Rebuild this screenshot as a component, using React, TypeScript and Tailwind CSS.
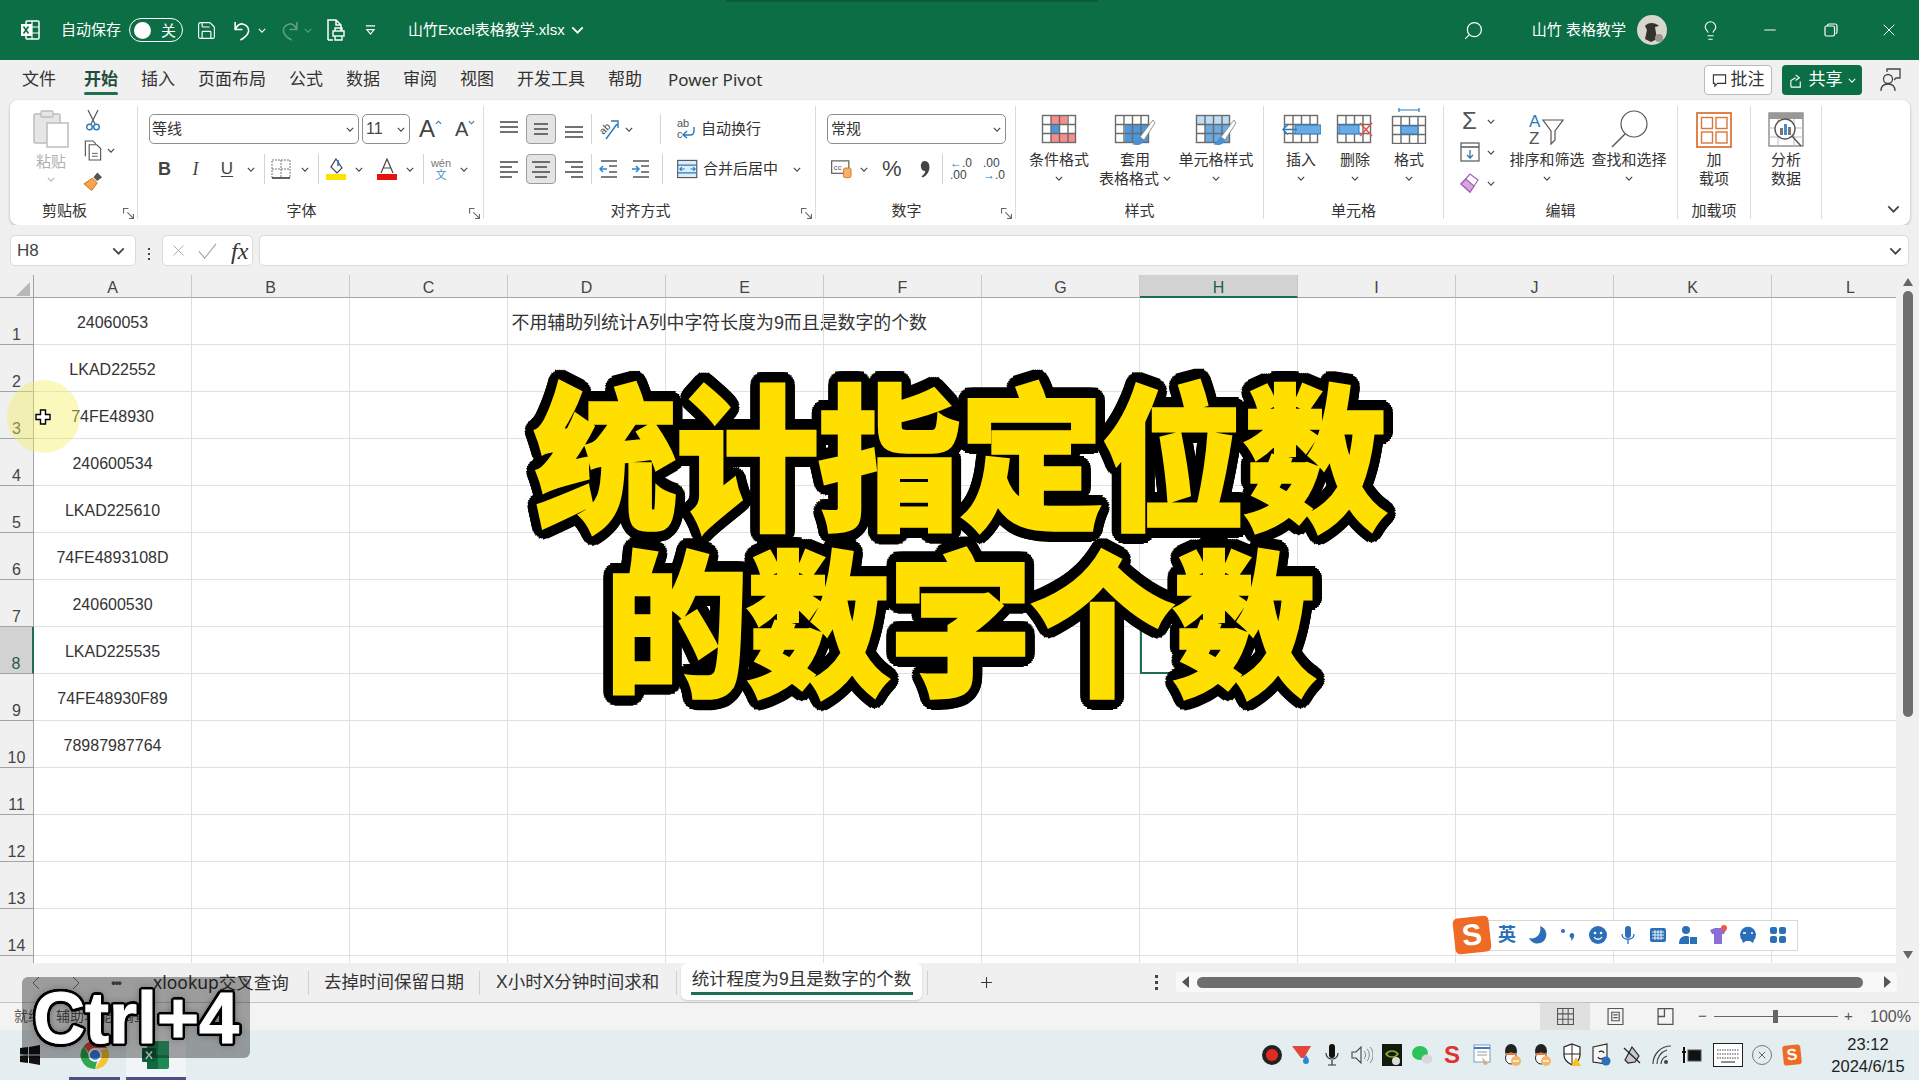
import type { ReactNode } from 'react'
import { Save, Search, Lightbulb, Minus, X, Plus } from 'lucide-react'

const CJK = "font-['Liberation_Sans','Noto_Sans_CJK_SC',sans-serif]"

// round outline for the big title and the key overlay
function outline(radius: number, color: string) {
  const rings = [radius, radius * 0.5]
  const parts: string[] = []
  for (const r of rings) {
    for (let i = 0; i < 32; i++) {
      const a = (i / 32) * Math.PI * 2
      parts.push(`${(Math.cos(a) * r).toFixed(1)}px ${(Math.sin(a) * r).toFixed(1)}px 0 ${color}`)
    }
  }
  return parts.join(',')
}

function Ch({ color = '#444', big = false }: { color?: string; big?: boolean }) {
  return (
    <svg viewBox="0 0 10 6" className={big ? 'h-[8px] w-[13px]' : 'h-[5px] w-[8px]'} aria-hidden="true">
      <path d="M1 1l4 4 4-4" fill="none" stroke={color} strokeWidth="1.4" />
    </svg>
  )
}

function Launcher() {
  return (
    <svg viewBox="0 0 10 10" className="absolute bottom-[0px] right-[3px] h-[11px] w-[11px]" aria-hidden="true">
      <path d="M.5 5V.5H5M4 4l5 5M9.5 5.5v4H5.5" fill="none" stroke="#666" strokeWidth="1" />
    </svg>
  )
}

function Sep() {
  return <div className="h-[30px] w-px shrink-0 bg-[#d4d4d4]" />
}

function Group({ label, className, launcher, children }: { label: string; className: string; launcher?: boolean; children: ReactNode }) {
  return (
    <div className={`relative flex h-[113px] shrink-0 flex-col border-r border-[#dcdcdc] ${className}`}>
      <div className="h-[96px]">{children}</div>
      <div className={`text-center text-[15px] leading-[17px] text-[#333] ${launcher ? 'pr-[18px]' : ''}`}>{label}</div>
      {launcher && <Launcher />}
    </div>
  )
}

function TableGrid() {
  return (
    <g fill="none" stroke="#6b6b6b" strokeWidth="1.4">
      <rect x="1.5" y="1.5" width="33" height="27" />
      <path d="M10 1.5v27M18.5 1.5v27M27 1.5v27M1.5 10.5h33M1.5 19.5h33" />
    </g>
  )
}

function Brush() {
  return (
    <g>
      <path d="M39 6L26 23l4 3L41 9z" fill="#fff" stroke="#8a8a8a" strokeWidth=".9" />
      <path d="M26 23c-3 1-3 5-8 7 5 2 11 1 12-4z" fill="#4a90d0" />
    </g>
  )
}

function BigButton({ icon, lines, chevronInline, className }: { icon: ReactNode; lines: string[]; chevronInline?: boolean; className: string }) {
  return (
    <div className={`flex shrink-0 flex-col items-center pt-[8px] text-[15px] leading-[19px] text-[#333] ${className}`}>
      <div className="flex h-[36px] items-start justify-center">{icon}</div>
      <div className="whitespace-nowrap">{lines[0]}</div>
      {lines[1] ? (
        <div className="flex items-center gap-[4px] whitespace-nowrap">
          {lines[1]}
          {chevronInline && <Ch />}
        </div>
      ) : (
        <div className="flex h-[19px] items-center"><Ch /></div>
      )}
    </div>
  )
}

function AlignLines({ d, box }: { d: string; box?: boolean }) {
  return (
    <div className={`flex h-[30px] w-[30px] items-center justify-center rounded-[4px] ${box ? 'border border-[#9c9c9c] bg-[#e4e4e4]' : ''}`}>
      <svg viewBox="0 0 20 20" className="h-[20px] w-[20px]" aria-hidden="true">
        <path d={d} fill="none" stroke="#444" strokeWidth="1.4" />
      </svg>
    </div>
  )
}

function IndentIcon({ flip }: { flip?: boolean }) {
  return (
    <svg viewBox="0 0 20 20" className="h-[20px] w-[20px]" aria-hidden="true">
      <path d="M2 2h16M10 7h8M10 13h8M2 18h16" fill="none" stroke="#555" strokeWidth="1.3" />
      <path d={flip ? 'M1 10h7M5 7l3 3-3 3' : 'M8 10H1M4 7l-3 3 3 3'} fill="none" stroke="#2a87d8" strokeWidth="1.5" />
    </svg>
  )
}

function TitleBar() {
  return (
    <header className="relative flex h-[60px] shrink-0 items-center bg-[#0b6e45] text-[15px] text-white">
      <div className="absolute left-[726px] top-0 h-[2px] w-[372px] bg-[#0a5a39]" />
      <svg viewBox="0 0 20 20" className="ml-[20px] h-[20px] w-[20px]" aria-hidden="true">
        <rect x="6" y="1" width="13" height="18" rx="1" fill="none" stroke="#fff" strokeWidth="1.5" />
        <path d="M12 1v18M6 7h13M6 13h13" stroke="#fff" strokeWidth="1.2" />
        <rect x="1" y="4" width="11" height="12" fill="#fff" />
        <path d="M3.5 6.5l5 7M8.5 6.5l-5 7" stroke="#0b6e45" strokeWidth="1.6" />
      </svg>
      <span className="ml-[21px] w-[60px] whitespace-nowrap">自动保存</span>
      <div className="ml-[8px] flex h-[24px] w-[54px] items-center rounded-full border border-white pl-[4px]">
        <div className="h-[17px] w-[17px] rounded-full bg-white" />
        <span className="ml-[10px] text-[15px] leading-none">关</span>
      </div>
      <Save className="ml-[13px] h-[21px] w-[21px]" strokeWidth={1.3} aria-hidden="true" />
      <svg viewBox="0 0 20 20" className="ml-[15px] h-[21px] w-[21px]" aria-hidden="true">
        <path d="M3 2v7h7M3 9c2-4 5-6 8-5 4 1 6 5 4 9-1 2-3 4-7 6" fill="none" stroke="#fff" strokeWidth="1.5" />
      </svg>
      <span className="ml-[5px]"><Ch color="#fff" /></span>
      <svg viewBox="0 0 20 20" className="ml-[13px] h-[21px] w-[21px]" aria-hidden="true">
        <path d="M17 2v7h-7M17 9c-2-4-5-6-8-5-4 1-6 5-4 9 1 2 3 4 7 6" fill="none" stroke="#5f9f84" strokeWidth="1.5" />
      </svg>
      <span className="ml-[4px]"><Ch color="#5f9f84" /></span>
      <svg viewBox="0 0 20 22" className="ml-[14px] h-[22px] w-[20px]" aria-hidden="true">
        <path d="M2 21V1h8l5 5v6M10 1v5h5" fill="none" stroke="#fff" strokeWidth="1.5" />
        <rect x="7" y="12" width="11" height="5" fill="none" stroke="#fff" strokeWidth="1.4" />
        <path d="M9 12V9h7v3M9 17v4h7v-4M2 21h5" fill="none" stroke="#fff" strokeWidth="1.4" />
      </svg>
      <svg viewBox="0 0 12 12" className="ml-[19px] h-[13px] w-[11px]" aria-hidden="true">
        <path d="M1 1h10M2 5l4 5 4-5z" fill="none" stroke="#fff" strokeWidth="1.2" />
      </svg>
      <span className="ml-[32px] whitespace-nowrap">山竹Excel表格教学.xlsx</span>
      <span className="ml-[6px]"><Ch color="#fff" big /></span>

      <div className="ml-auto flex items-center">
        <Search className="h-[21px] w-[21px] -scale-x-100" strokeWidth={1.4} aria-hidden="true" />
        <span className="ml-[48px] whitespace-nowrap">山竹 表格教学</span>
        <svg viewBox="0 0 30 30" className="ml-[11px] h-[30px] w-[30px]" aria-hidden="true">
          <circle cx="15" cy="15" r="15" fill="#d9d6cc" />
          <path d="M8 11c3-4 10-4 14 0l-4 1 2 12-6 3-6-3 2-9z" fill="#33322f" />
          <circle cx="22" cy="23" r="4" fill="#99968d" />
        </svg>
        <Lightbulb className="ml-[33px] h-[21px] w-[21px]" strokeWidth={1.3} aria-hidden="true" />
        <Minus className="ml-[40px] h-[18px] w-[18px]" strokeWidth={1.3} aria-hidden="true" />
        <svg viewBox="0 0 14 14" className="ml-[45px] h-[14px] w-[14px]" aria-hidden="true">
          <rect x="1" y="3" width="9.5" height="10" rx="1.5" fill="none" stroke="#fff" strokeWidth="1.2" />
          <path d="M3.5 3V2.5C3.5 1.5 4 1 5 1h6c1.2 0 2 .8 2 2v6c0 1-.5 1.5-1.5 1.5" fill="none" stroke="#fff" strokeWidth="1.2" />
        </svg>
        <X className="ml-[41px] mr-[20px] h-[20px] w-[20px]" strokeWidth={1.2} aria-hidden="true" />
      </div>
    </header>
  )
}

const tabs = ['文件', '开始', '插入', '页面布局', '公式', '数据', '审阅', '视图', '开发工具', '帮助', 'Power Pivot']

function TabRow() {
  return (
    <nav className="flex h-[40px] shrink-0 items-center bg-[#f0f0f0] pl-[22px] text-[17px] text-[#333]">
      <div className="flex gap-[23px] pt-[2px]">
        {tabs.map(t => (
          <div key={t} className={`relative h-[32px] whitespace-nowrap leading-[30px] ${t === '开始' ? 'ml-[5px] font-bold text-[#1f4f3a]' : ''} ${t === 'Power Pivot' ? "ml-[3px] font-['Noto_Sans',sans-serif]" : ''}`}>
            {t}
            {t === '开始' && <div className="absolute bottom-[2px] left-0 h-[3px] w-full rounded-full bg-[#1f6e4d]" />}
          </div>
        ))}
      </div>
      <div className="ml-auto flex items-center">
        <div className="flex h-[30px] w-[68px] items-center justify-center gap-[4px] rounded-[4px] border border-[#b9b9b9] bg-white text-[17px]">
          <svg viewBox="0 0 16 16" className="h-[15px] w-[15px]" aria-hidden="true">
            <path d="M1.5 2h13v9H6l-3 3v-3H1.5z" fill="none" stroke="#333" strokeWidth="1.2" />
          </svg>
          批注
        </div>
        <div className="ml-[10px] flex h-[30px] w-[80px] items-center justify-center gap-[5px] rounded-[4px] bg-[#0b6e45] text-[17px] text-white">
          <svg viewBox="0 0 16 16" className="h-[15px] w-[15px]" aria-hidden="true">
            <path d="M2 15V8l5-3M7 2l4 3-4 3M2 15h10V9" fill="none" stroke="#fff" strokeWidth="1.2" />
          </svg>
          共享
          <Ch color="#fff" />
        </div>
        <svg viewBox="0 0 22 24" className="ml-[17px] mr-[18px] h-[24px] w-[22px]" aria-hidden="true">
          <circle cx="9" cy="11" r="4.5" fill="none" stroke="#444" strokeWidth="1.3" />
          <path d="M2 23c0-5 3-7 7-7s7 2 7 7M8 4V1h13v9h-4l-2 2" fill="none" stroke="#444" strokeWidth="1.3" />
        </svg>
      </div>
    </nav>
  )
}

function Ribbon() {
  return (
    <div className="h-[125px] shrink-0 bg-[#f0f0f0] px-[10px]">
      <div className="flex h-[125px] w-[1900px] rounded-[8px] bg-white py-[6px] shadow-[0_1px_3px_rgba(0,0,0,0.28)]">
        <Group label="剪贴板" launcher className="w-[128px]">
          <div className="flex h-full">
            <div className="ml-[23px] flex w-[36px] flex-col items-center pt-[4px]">
              <svg viewBox="0 0 36 38" className="h-[38px] w-[36px]" aria-hidden="true">
                <rect x="1" y="4" width="26" height="29" rx="1" fill="#e6e6e6" stroke="#bdbdbd" strokeWidth="1.5" />
                <rect x="8" y="1" width="12" height="6" rx="1" fill="#e6e6e6" stroke="#bdbdbd" strokeWidth="1.3" />
                <rect x="14" y="13" width="21" height="24" fill="#fff" stroke="#bdbdbd" strokeWidth="1.5" />
              </svg>
              <span className="mt-[5px] whitespace-nowrap text-[15px] leading-[18px] text-[#b0b0b0]">粘贴</span>
              <span className="mt-[6px]"><Ch color="#b5b5b5" /></span>
            </div>
            <div className="ml-[14px] flex flex-col items-start">
              <svg viewBox="0 0 16 22" className="mt-[3px] ml-[2px] h-[22px] w-[16px]" aria-hidden="true">
                <path d="M3 1l7 14M13 1L6 15" fill="none" stroke="#555" strokeWidth="1.2" />
                <circle cx="4.5" cy="18" r="2.8" fill="none" stroke="#2a7ab8" strokeWidth="1.4" />
                <circle cx="11.5" cy="18" r="2.8" fill="none" stroke="#2a7ab8" strokeWidth="1.4" />
              </svg>
              <div className="mt-[9px] flex items-center">
                <svg viewBox="0 0 20 22" className="h-[21px] w-[20px]" aria-hidden="true">
                  <path d="M2 17V1h8l3 3M6 21V5h8l4 4v12z" fill="#fff" stroke="#555" strokeWidth="1.2" />
                  <path d="M9 14h6M9 17h6" stroke="#555" strokeWidth="1" />
                </svg>
                <span className="ml-[4px]"><Ch /></span>
              </div>
              <svg viewBox="0 0 22 22" className="mt-[9px] h-[22px] w-[21px]" aria-hidden="true">
                <path d="M15 2l5 5-5 4-4-4z" fill="#555" />
                <path d="M10 8l5 5-6 8-8-7z" fill="#f5a54a" stroke="#c9701c" strokeWidth="1" />
              </svg>
            </div>
          </div>
        </Group>

        <Group label="字体" launcher className="w-[346px]">
          <div className="pl-[11px] pt-[8px]">
            <div className="flex h-[30px] items-center">
              <div className="flex h-[30px] w-[210px] items-center justify-between rounded-[5px] border border-[#8f8f8f] pl-[2px] pr-[4px] text-[15px] text-[#333]">
                等线<Ch />
              </div>
              <div className="ml-[3px] flex h-[30px] w-[48px] items-center justify-between rounded-[5px] border border-[#8f8f8f] pl-[3px] pr-[4px] text-[16px] text-[#444]">
                11<Ch />
              </div>
              <div className="ml-[9px] flex items-start text-[24px] leading-[24px] text-[#444]">
                A<svg viewBox="0 0 8 5" className="mt-[3px] h-[5px] w-[7px]" aria-hidden="true"><path d="M1 4l3-3 3 3" fill="none" stroke="#2a7ab8" strokeWidth="1.3" /></svg>
              </div>
              <div className="ml-[13px] flex items-start text-[20px] leading-[24px] text-[#444]">
                A<svg viewBox="0 0 8 5" className="mt-[3px] h-[5px] w-[7px]" aria-hidden="true"><path d="M1 1l3 3 3-3" fill="none" stroke="#2a7ab8" strokeWidth="1.3" /></svg>
              </div>
            </div>
            <div className="mt-[10px] flex h-[30px] items-center text-[#444]">
              <div className="flex w-[31px] justify-center font-['Liberation_Sans'] text-[18px] font-bold">B</div>
              <div className="flex w-[31px] justify-center font-['Liberation_Serif'] text-[18px] italic">I</div>
              <div className="flex w-[32px] justify-center font-['Liberation_Sans'] text-[17px] underline underline-offset-2">U</div>
              <div className="flex w-[16px] justify-center"><Ch /></div>
              <div className="ml-[5px]"><Sep /></div>
              <div className="flex w-[32px] justify-center">
                <svg viewBox="0 0 20 20" className="h-[20px] w-[20px]" aria-hidden="true">
                  <path d="M1 1h18v18H1zM10 1v18M1 10h18" fill="none" stroke="#777" strokeWidth="1" strokeDasharray="2 1" />
                  <path d="M1 19h18" stroke="#444" strokeWidth="1.6" />
                </svg>
              </div>
              <div className="flex w-[16px] justify-center"><Ch /></div>
              <div className="ml-[5px]"><Sep /></div>
              <div className="flex w-[34px] justify-center">
                <svg viewBox="0 0 22 22" className="h-[22px] w-[22px]" aria-hidden="true">
                  <path d="M11 1l6 9-5 5-6-6z" fill="#fff" stroke="#444" strokeWidth="1.2" />
                  <path d="M13 2v6" stroke="#2a7ab8" strokeWidth="1.6" />
                  <rect x="1" y="16" width="20" height="6" fill="#fde400" />
                </svg>
              </div>
              <div className="flex w-[12px] justify-center"><Ch /></div>
              <div className="ml-[6px] flex w-[32px] justify-center">
                <svg viewBox="0 0 22 22" className="h-[22px] w-[22px]" aria-hidden="true">
                  <path d="M5 15l6-14 6 14M7.5 10h7" fill="none" stroke="#444" strokeWidth="1.2" />
                  <rect x="1" y="16" width="20" height="6" fill="#e8120c" />
                </svg>
              </div>
              <div className="flex w-[14px] justify-center"><Ch /></div>
              <div className="ml-[6px]"><Sep /></div>
              <div className="flex w-[34px] flex-col items-center text-[11px] leading-[12px]">
                <span className="text-[#777]">wén</span>
                <span className="text-[#3d8fc4]">文</span>
              </div>
              <div className="flex w-[12px] justify-center"><Ch /></div>
            </div>
          </div>
        </Group>

        <Group label="对齐方式" launcher className="w-[332px]">
          <div className="flex pl-[10px] pt-[8px]">
            <div className="flex w-[97px] flex-col gap-[10px]">
              <div className="flex items-center">
                <AlignLines d="M1 3h18M1 8h18M1 13h18" />
                <span className="ml-[2px]"><AlignLines box d="M3 5h14M3 10h14M3 15h14" /></span>
                <span className="ml-[3px]"><AlignLines d="M1 8h18M1 13h18M1 18h18" /></span>
              </div>
              <div className="flex items-center">
                <AlignLines d="M1 3h18M1 8h12M1 13h18M1 18h12" />
                <span className="ml-[2px]"><AlignLines box d="M1 3h18M4 8h12M1 13h18M4 18h12" /></span>
                <span className="ml-[3px]"><AlignLines d="M1 3h18M7 8h12M1 13h18M7 18h12" /></span>
              </div>
            </div>
            <div className="flex flex-col gap-[10px]">
              <div className="flex h-[30px] items-center">
                <Sep />
                <svg viewBox="0 0 22 22" className="ml-[6px] h-[22px] w-[22px] overflow-visible" aria-hidden="true">
                  <path d="M8 21L19 6M13 3h7v7" fill="none" stroke="#2a7ab8" strokeWidth="1.4" />
                  <text x="2" y="15" fontSize="10" fill="#444" transform="rotate(-45 6 12)">ab</text>
                </svg>
                <span className="ml-[5px]"><Ch /></span>
                <div className="ml-[27px]"><Sep /></div>
                <svg viewBox="0 0 20 24" className="ml-[15px] h-[24px] w-[20px]" aria-hidden="true">
                  <text x="1" y="10" fontSize="11" fill="#555">ab</text>
                  <text x="1" y="21" fontSize="11" fill="#555">c</text>
                  <path d="M18 10v4c0 3-2 4-4 4H8M11 14l-4 4 4 3" fill="none" stroke="#2a7ab8" strokeWidth="1.4" />
                </svg>
                <span className="ml-[5px] whitespace-nowrap text-[15px] text-[#333]">自动换行</span>
              </div>
              <div className="flex h-[30px] items-center">
                <Sep />
                <span className="ml-[7px]"><IndentIcon /></span>
                <span className="ml-[12px]"><IndentIcon flip /></span>
                <div className="ml-[11px]"><Sep /></div>
                <svg viewBox="0 0 22 20" className="ml-[14px] h-[20px] w-[21px]" aria-hidden="true">
                  <rect x=".7" y="1" width="20" height="18" fill="#dceefa" stroke="#555" strokeWidth="1.2" />
                  <path d="M1 6h20M1 14h20M8 10H3m2-2l-2 2 2 2M14 10h5m-2-2l2 2-2 2" fill="none" stroke="#2a7ab8" strokeWidth="1.2" />
                </svg>
                <span className="ml-[5px] whitespace-nowrap text-[15px] text-[#333]">合并后居中</span>
                <span className="ml-[15px]"><Ch /></span>
              </div>
            </div>
          </div>
        </Group>

        <Group label="数字" launcher className="w-[200px]">
          <div className="pl-[11px] pt-[8px]">
            <div className="flex h-[30px] w-[179px] items-center justify-between rounded-[5px] border border-[#8f8f8f] pl-[3px] pr-[4px] text-[15px] text-[#333]">
              常规<Ch />
            </div>
            <div className="mt-[10px] flex h-[30px] items-center">
              <svg viewBox="0 0 22 20" className="ml-[4px] h-[20px] w-[21px]" aria-hidden="true">
                <rect x=".7" y="1.5" width="18" height="13" fill="none" stroke="#555" strokeWidth="1.2" />
                <text x="3" y="11" fontSize="8" fill="#555">cc</text>
                <rect x="13" y="9" width="8" height="10" rx="2" fill="#f6b26b" stroke="#d9761c" strokeWidth="1" />
              </svg>
              <span className="ml-[8px]"><Ch /></span>
              <span className="ml-[14px] w-[20px] text-[22px] leading-none text-[#444]">%</span>
              <svg viewBox="0 0 10 18" className="ml-[18px] h-[18px] w-[10px]" aria-hidden="true">
                <path d="M4.5 1C8 1 9.5 4 9.5 7c0 5-3 9-7 10.500l-1-1C4 14.5 5 13 5.200 11 2.500 11 .8 9 .8 6 .8 3 2.500 1 4.500 1z" fill="#444" />
              </svg>
              <div className="ml-[12px]"><Sep /></div>
              <div className="ml-[7px] flex w-[20px] flex-col whitespace-nowrap text-[12px] leading-[12px] text-[#444]">
                <span className="text-[#2a7ab8]">←<span className="text-[#444]">.0</span></span>
                <span>.00</span>
              </div>
              <div className="ml-[13px] flex w-[20px] flex-col whitespace-nowrap text-[12px] leading-[12px] text-[#444]">
                <span>.00</span>
                <span className="text-[#2a7ab8]">→<span className="text-[#444]">.0</span></span>
              </div>
            </div>
          </div>
        </Group>

        <Group label="样式" className="w-[248px]">
          <div className="flex">
            <BigButton
              className="ml-[12px] w-[62px]"
              lines={['条件格式']}
              icon={
                <svg viewBox="0 0 36 30" className="h-[30px] w-[36px]" aria-hidden="true">
                  <rect x="10" y="2" width="16" height="9" fill="#f98c8c" />
                  <rect x="10" y="20" width="25" height="9" fill="#f98c8c" />
                  <rect x="10" y="11" width="9" height="9" fill="#4a98dd" />
                  <TableGrid />
                </svg>
              }
            />
            <BigButton
              className="ml-[9px] w-[72px]"
              lines={['套用', '表格格式']}
              chevronInline
              icon={
                <svg viewBox="0 0 42 32" className="h-[32px] w-[42px]" aria-hidden="true">
                  <rect x="11" y="11" width="24" height="18" fill="#4a98dd" />
                  <TableGrid />
                  <Brush />
                </svg>
              }
            />
            <BigButton
              className="ml-[7px] w-[76px]"
              lines={['单元格样式']}
              icon={
                <svg viewBox="0 0 42 32" className="h-[32px] w-[42px]" aria-hidden="true">
                  <rect x="2" y="2" width="32" height="8" fill="#bfddf5" />
                  <rect x="10" y="10" width="24" height="18" fill="#6aaae6" />
                  <TableGrid />
                  <Brush />
                </svg>
              }
            />
          </div>
        </Group>

        <Group label="单元格" className="w-[180px]">
          <div className="flex">
            <BigButton
              className="ml-[19px] w-[36px]"
              lines={['插入']}
              icon={
                <svg viewBox="0 0 40 30" className="h-[30px] w-[40px]" aria-hidden="true">
                  <g transform="translate(2 0)"><TableGrid /></g>
                  <rect x="14" y="11" width="26" height="9" fill="#6aaae6" stroke="#2a7ab8" />
                  <path d="M16 15.5H2m5-5l-5 5 5 5" fill="#fff" stroke="#2a7ab8" strokeWidth="1.4" />
                </svg>
              }
            />
            <BigButton
              className="ml-[18px] w-[36px]"
              lines={['删除']}
              icon={
                <svg viewBox="0 0 38 30" className="h-[30px] w-[38px]" aria-hidden="true">
                  <TableGrid />
                  <rect x="3" y="11" width="20" height="9" fill="#6aaae6" stroke="#2a7ab8" />
                  <path d="M24 9l12 13M36 9L24 22" stroke="#e2574c" strokeWidth="1.6" />
                </svg>
              }
            />
            <BigButton
              className="ml-[18px] w-[36px]"
              lines={['格式']}
              icon={
                <svg viewBox="0 0 36 36" className="-mt-[6px] h-[36px] w-[36px]" aria-hidden="true">
                  <path d="M8 2h20M8 0v4M28 0v4" stroke="#2a7ab8" strokeWidth="1.2" />
                  <g transform="translate(0 7)">
                    <TableGrid />
                    <rect x="10" y="11" width="17" height="8" fill="#6aaae6" stroke="#2a7ab8" />
                  </g>
                </svg>
              }
            />
          </div>
        </Group>

        <Group label="编辑" className="w-[234px]">
          <div className="flex">
            <div className="ml-[16px] flex w-[40px] flex-col">
              <div className="flex h-[30px] items-center">
                <span className="ml-[2px] w-[18px] text-[24px] leading-none text-[#555]">Σ</span>
                <span className="ml-[7px]"><Ch /></span>
              </div>
              <div className="mt-[1px] flex h-[30px] items-center">
                <svg viewBox="0 0 20 20" className="h-[20px] w-[20px]" aria-hidden="true">
                  <rect x="1" y="1" width="18" height="18" fill="#fff" stroke="#555" strokeWidth="1.2" />
                  <path d="M1 5h18" stroke="#555" strokeWidth="1.5" />
                  <path d="M10 8v8m-3-3l3 3 3-3" fill="none" stroke="#2a7ab8" strokeWidth="1.3" />
                </svg>
                <span className="ml-[7px]"><Ch /></span>
              </div>
              <div className="mt-[1px] flex h-[30px] items-center">
                <svg viewBox="0 0 20 20" className="h-[20px] w-[20px]" aria-hidden="true">
                  <path d="M1 11l9-10 8 6-8 12z" fill="#fff" stroke="#a45fb8" strokeWidth="1.2" />
                  <path d="M1 11l5-5 8 7-4 6z" fill="#d6a6e2" stroke="#a45fb8" strokeWidth="1.2" />
                </svg>
                <span className="ml-[7px]"><Ch /></span>
              </div>
            </div>
            <BigButton
              className="ml-[9px] w-[76px]"
              lines={['排序和筛选']}
              icon={
                <svg viewBox="0 0 36 36" className="-mt-[4px] h-[36px] w-[36px] overflow-visible" aria-hidden="true">
                  <text x="0" y="17" fontSize="17" fill="#2a7ab8">A</text>
                  <text x="0" y="34" fontSize="17" fill="#555">Z</text>
                  <path d="M14 10h20l-8 11v9l-4 4V21z" fill="#fff" stroke="#555" strokeWidth="1.2" />
                </svg>
              }
            />
            <BigButton
              className="ml-[6px] w-[76px]"
              lines={['查找和选择']}
              icon={
                <svg viewBox="0 0 38 38" className="-mt-[4px] h-[38px] w-[38px]" aria-hidden="true">
                  <circle cx="24" cy="14" r="13" fill="#fff" stroke="#555" strokeWidth="1.2" />
                  <path d="M15 24L2 37" stroke="#555" strokeWidth="1.4" />
                </svg>
              }
            />
          </div>
        </Group>

        <Group label="加载项" className="w-[73px]">
          <BigButton
            className="w-full"
            lines={['加', '载项']}
            icon={
              <svg viewBox="0 0 36 36" className="-mt-[2px] h-[36px] w-[36px]" aria-hidden="true">
                <rect x="1" y="1" width="34" height="34" fill="#fff" stroke="#d9773c" strokeWidth="1.8" />
                <rect x="5.5" y="5.5" width="11" height="11" fill="none" stroke="#d9773c" strokeWidth="1.4" />
                <rect x="20" y="5.5" width="11" height="11" fill="none" stroke="#d9773c" strokeWidth="1.4" />
                <rect x="5.5" y="20" width="11" height="11" fill="none" stroke="#d9773c" strokeWidth="1.4" />
                <rect x="20" y="20" width="11" height="11" fill="none" stroke="#d9773c" strokeWidth="1.4" />
              </svg>
            }
          />
        </Group>

        <Group label="" className="w-[71px]">
          <BigButton
            className="w-full"
            lines={['分析', '数据']}
            icon={
              <svg viewBox="0 0 36 36" className="-mt-[2px] h-[36px] w-[36px]" aria-hidden="true">
                <rect x="1" y="1" width="34" height="33" fill="#fff" stroke="#777" strokeWidth="1.2" />
                <rect x="1" y="1" width="34" height="6" fill="#999" />
                <path d="M1 16h34M1 25h34M10 7v27M26 7v27" stroke="#bbb" strokeWidth="1" />
                <circle cx="17" cy="17" r="10" fill="#fff" stroke="#555" strokeWidth="1.4" />
                <path d="M24 24l9 10" stroke="#555" strokeWidth="1.4" />
                <rect x="12" y="16" width="3" height="7" fill="#777" />
                <rect x="16" y="12" width="3" height="11" fill="#3f8ccf" />
                <rect x="20" y="15" width="3" height="8" fill="#777" />
              </svg>
            }
          />
        </Group>

        <div className="flex h-[113px] flex-1 items-end justify-end pb-[6px] pr-[10px]">
          <Ch big />
        </div>
      </div>
    </div>
  )
}

function FormulaBar() {
  return (
    <div className="flex h-[50px] shrink-0 bg-[#f0f0f0] px-[10px] pt-[10px] text-[#444]">
      <div className="flex h-[31px] w-[126px] items-center justify-between rounded-[5px] border border-[#dadada] bg-white pl-[6px] pr-[10px] text-[17px]">
        H8<Ch big />
      </div>
      <div className="flex w-[26px] flex-col items-center justify-center gap-[3px] pb-[2px]">
        <div className="h-[2px] w-[2px] bg-[#444]" />
        <div className="h-[2px] w-[2px] bg-[#444]" />
        <div className="h-[2px] w-[2px] bg-[#444]" />
      </div>
      <div className="flex h-[31px] w-[91px] items-center rounded-[5px] border border-[#dadada] bg-white pl-[6px]">
        <X className="h-[19px] w-[19px] text-[#a0a0a0]" strokeWidth={1.1} aria-hidden="true" />
        <svg viewBox="0 0 20 20" className="ml-[10px] h-[19px] w-[19px]" aria-hidden="true">
          <path d="M1 11l6 7L19 3" fill="none" stroke="#a0a0a0" strokeWidth="1.1" />
        </svg>
        <span className="ml-[14px] font-['Liberation_Serif'] text-[24px] italic leading-none text-[#333]">fx</span>
      </div>
      <div className="ml-[6px] flex h-[31px] flex-1 items-center justify-end rounded-[5px] border border-[#dadada] bg-white pr-[6px]">
        <Ch big />
      </div>
    </div>
  )
}

const COLS = ['A', 'B', 'C', 'D', 'E', 'F', 'G', 'H', 'I', 'J', 'K', 'L']
const A_VALUES = ['24060053', 'LKAD22552', '74FE48930', '240600534', 'LKAD225610', '74FE4893108D', '240600530', 'LKAD225535', '74FE48930F89', '78987987764']
const ROW_NOS = [1, 2, 3, 4, 5, 6, 7, 8, 9, 10, 11, 12, 13, 14, 15]

function Sheet() {
  return (
    <div className="flex h-[688px] shrink-0 bg-white">
      <div className="w-[1896px] overflow-hidden">
        <div className="flex h-[23px] bg-[#f0f0f0]">
          <div className="flex w-[34px] shrink-0 items-end justify-end border-b border-r border-[#a3a3a3] pb-[1px] pr-[3px]">
            <svg viewBox="0 0 11 11" className="h-[14px] w-[14px]" aria-hidden="true">
              <path d="M11 0v11H0z" fill="#b8b8b8" />
            </svg>
          </div>
          {COLS.map(c => (
            <div
              key={c}
              className={`flex h-[23px] w-[158px] shrink-0 items-center justify-center border-r border-[#c8c8c8] pt-[4px] text-[16px] leading-none ${c === 'H' ? 'border-b-[2px] border-b-[#1f6e4d] bg-[#d2d2d2] text-[#1f5c43]' : 'border-b border-b-[#a3a3a3] text-[#444]'}`}
            >
              {c}
            </div>
          ))}
        </div>
        {ROW_NOS.map(r => (
          <div key={r} className="flex h-[47px]">
            <div className={`flex w-[34px] shrink-0 items-end justify-center border-b text-[16px] leading-[18px] ${r === 8 ? 'border-r-[2px] border-b-[#a3a3a3] border-r-[#1f6e4d] bg-[#d2d2d2] text-[#1f5c43]' : 'border-r border-[#a3a3a3] bg-[#f0f0f0] text-[#444]'}`}>
              {r}
            </div>
            {COLS.map(c => (
              <div key={c} className="flex h-[47px] w-[158px] shrink-0 items-center justify-center border-b border-r border-[#e0e0e0] pt-[3px] text-[16px] text-[#333]">
                {c === 'A' ? A_VALUES[r - 1] : ''}
                {c === 'D' && r === 1 && <span className="mt-[2px] w-0 self-center whitespace-nowrap text-[17.9px] [margin-left:-150px]">不用辅助列统计A列中字符长度为9而且是数字的个数</span>}
              </div>
            ))}
          </div>
        ))}
      </div>
      <div className="flex w-[23px] flex-col items-center bg-[#f0f0f0]">
        <svg viewBox="0 0 10 8" className="mt-[3px] h-[8px] w-[10px]" aria-hidden="true"><path d="M5 0l5 8H0z" fill="#666" /></svg>
        <div className="mt-[5px] h-[426px] w-[10px] rounded-full bg-[#6e6e6e]" />
        <div className="flex-1" />
        <svg viewBox="0 0 10 8" className="mb-[4px] h-[8px] w-[10px]" aria-hidden="true"><path d="M5 8l5-8H0z" fill="#666" /></svg>
      </div>
    </div>
  )
}

function SheetTabs() {
  return (
    <div className="flex h-[40px] shrink-0 items-start border-b border-[#c4c4c4] bg-[#f0f0f0] text-[17.5px] text-[#333]">
      <div className="flex h-[39px] items-center">
        <span className="ml-[32px] w-[8px]"><svg viewBox="0 0 8 14" className="h-[14px] w-[8px]" aria-hidden="true"><path d="M7 1L1 7l6 6" fill="none" stroke="#777" strokeWidth="1" /></svg></span>
        <span className="ml-[32px] w-[8px]"><svg viewBox="0 0 8 14" className="h-[14px] w-[8px]" aria-hidden="true"><path d="M1 1l6 6-6 6" fill="none" stroke="#777" strokeWidth="1" /></svg></span>
        <span className="ml-[24px] w-[24px] text-center text-[12px] font-bold leading-none tracking-[-1px] text-[#555]">•••</span>
        <span className="ml-[25px] w-[139px] whitespace-nowrap font-['Noto_Sans','Noto_Sans_CJK_SC',sans-serif]">xlookup交叉查询</span>
        <div className="ml-[16px] h-[24px] w-px bg-[#d0d0d0]" />
        <span className="ml-[15px] w-[141px] whitespace-nowrap">去掉时间保留日期</span>
        <div className="ml-[14px] h-[24px] w-px bg-[#d0d0d0]" />
        <span className="ml-[16px] w-[164px] whitespace-nowrap">X小时X分钟时间求和</span>
        <div className="ml-[16px] h-[24px] w-px bg-[#d0d0d0]" />
      </div>
      <div className="relative ml-[4px] flex h-[37px] w-[241px] justify-center rounded-[6px] bg-white pt-[3px] leading-[26px] shadow-[0_1px_2px_rgba(0,0,0,0.15)]">
        统计程度为9且是数字的个数
        <div className="absolute bottom-[5px] left-[10px] right-[9px] h-[3px] bg-[#1f6e4d]" />
      </div>
      <div className="ml-[5px] mt-[8px] h-[24px] w-px bg-[#d0d0d0]" />
      <Plus className="ml-[50px] mt-[11px] h-[17px] w-[17px]" strokeWidth={1.5} aria-hidden="true" />
      <div className="ml-[160px] mt-[12px] flex flex-col gap-[3px]">
        <div className="h-[3px] w-[3px] bg-[#444]" />
        <div className="h-[3px] w-[3px] bg-[#444]" />
        <div className="h-[3px] w-[3px] bg-[#444]" />
      </div>
      <div className="ml-[18px] mt-[9px] flex h-[20px] w-[721px] items-center rounded-[4px] bg-[#f8f8f8] px-[6px]">
        <svg viewBox="0 0 7 12" className="h-[12px] w-[7px]" aria-hidden="true"><path d="M7 0v12L0 6z" fill="#555" /></svg>
        <div className="ml-[8px] h-[11px] flex-1 rounded-full bg-[#6e6e6e]" />
        <svg viewBox="0 0 7 12" className="ml-[21px] h-[12px] w-[7px]" aria-hidden="true"><path d="M0 0v12l7-6z" fill="#555" /></svg>
      </div>
    </div>
  )
}

function StatusBar() {
  return (
    <div className="flex h-[27px] shrink-0 items-center bg-[#f3f3f3] pl-[14px] text-[14px] text-[#555]">
      <span>就绪</span>
      <span className="ml-[14px]">辅助功能: 调查</span>
      <div className="ml-auto flex h-full items-center">
        <div className="flex h-full w-[50px] items-center justify-center bg-[#e0e0e0]">
          <svg viewBox="0 0 16 16" className="h-[17px] w-[17px]" aria-hidden="true">
            <path d="M.5.5h15v15H.5zM5.5.5v15M10.5.5v15M.5 5.5h15M.5 10.5h15" fill="none" stroke="#555" strokeWidth="1" />
          </svg>
        </div>
        <div className="flex h-full w-[50px] items-center justify-center">
          <svg viewBox="0 0 16 16" className="h-[17px] w-[17px]" aria-hidden="true">
            <path d="M1 .5h14v15H1zM4.5 4h7v8h-7zM6 6.5h4M6 9h4" fill="none" stroke="#555" strokeWidth="1.1" />
          </svg>
        </div>
        <div className="flex h-full w-[50px] items-center justify-center">
          <svg viewBox="0 0 16 16" className="h-[17px] w-[17px]" aria-hidden="true">
            <path d="M1 .5h14v15H1zM7 .5V8H1" fill="none" stroke="#555" strokeWidth="1.2" />
          </svg>
        </div>
        <span className="ml-[8px] w-[8px] text-center text-[15px]">−</span>
        <div className="relative ml-[8px] h-px w-[124px] bg-[#666]">
          <div className="absolute left-[59px] top-[-6px] h-[13px] w-[5px] bg-[#666]" />
        </div>
        <span className="ml-[6px] w-[8px] text-center text-[15px]">+</span>
        <span className="ml-[18px] mr-[9px] w-[40px] whitespace-nowrap text-[16px]">100%</span>
      </div>
    </div>
  )
}

function TrayIcon({ children }: { children: ReactNode }) {
  return <div className="flex h-[30px] w-[30px] shrink-0 items-center justify-center">{children}</div>
}

function QQ() {
  return (
    <svg viewBox="0 0 18 24" className="h-[24px] w-[18px]" aria-hidden="true">
      <ellipse cx="8" cy="8" rx="6" ry="7" fill="#222" />
      <ellipse cx="8" cy="15" rx="5.5" ry="6" fill="#fff" stroke="#222" />
      <path d="M3 11h10" stroke="#e9792a" strokeWidth="2" />
      <circle cx="13" cy="18" r="5" fill="#f5b56a" />
      <path d="M10 18h6" stroke="#fff" strokeWidth="1.4" />
    </svg>
  )
}

function Taskbar() {
  return (
    <footer className="flex h-[50px] shrink-0 items-center bg-[#e4edf0] text-[#222]">
      <svg viewBox="0 0 20 20" className="ml-[20px] h-[20px] w-[20px]" aria-hidden="true">
        <path d="M0 3l8-1v7.5H0zM9 2l11-2v9.5H9zM0 10.5h8V18l-8-1zM9 10.5h11V20L9 18z" fill="#111" />
      </svg>
      <div className="relative ml-[29px] flex h-full w-[51px] items-start justify-center">
        <svg viewBox="0 0 28 28" className="mt-[10px] h-[30px] w-[30px]" aria-hidden="true">
          <path d="M14 1a13 13 0 0 1 11.3 6.5H14a6.5 6.5 0 0 0-6 4L3.6 5.6A13 13 0 0 1 14 1z" fill="#e2483a" />
          <path d="M25.3 7.5A13 13 0 0 1 14 27l5.700-9.800A6.5 6.5 0 0 0 19 10z" fill="#f7c32e" />
          <path d="M14 27A13 13 0 0 1 3.6 5.6L8 13.4a6.5 6.5 0 0 0 8 6z" fill="#2fa650" />
          <circle cx="14" cy="14" r="5.5" fill="#3b7de0" stroke="#fff" strokeWidth="1.5" />
        </svg>
        <div className="absolute bottom-0 left-0 h-[3px] w-full bg-[#4f4f85]" />
      </div>
      <div className="relative ml-[6px] flex h-full w-[60px] items-start justify-center bg-[#f1f5f6]">
        <svg viewBox="0 0 30 30" className="mt-[10px] h-[30px] w-[30px]" aria-hidden="true">
          <rect x="6" y="1" width="22" height="28" rx="2" fill="#1d8a58" />
          <rect x="17" y="1" width="11" height="14" fill="#35ad74" />
          <rect x="6" y="15" width="11" height="14" fill="#0f6b41" />
          <rect x="1" y="8" width="14" height="14" rx="1" fill="#0c5f3a" />
          <path d="M5 11.5l6 7M11 11.5l-6 7" stroke="#fff" strokeWidth="1.6" />
        </svg>
        <div className="absolute bottom-0 left-0 h-[3px] w-full bg-[#4f4f85]" />
      </div>

      <div className="ml-auto flex items-center">
        <TrayIcon><div className="flex h-[20px] w-[20px] items-center justify-center rounded-full bg-[#222]"><div className="h-[12px] w-[12px] rounded-full bg-[#e22b20]" /></div></TrayIcon>
        <TrayIcon>
          <svg viewBox="0 0 22 22" className="h-[22px] w-[22px]" aria-hidden="true">
            <path d="M1 2h9l4 0h6l-7 12h-3z" fill="#e2483a" />
            <path d="M15 11c-2 3-3 4-3 6a3 3 0 0 0 6 0c0-2-1-3-3-6z" fill="#2a87d8" />
          </svg>
        </TrayIcon>
        <TrayIcon>
          <svg viewBox="0 0 16 24" className="h-[24px] w-[16px]" aria-hidden="true">
            <rect x="5" y="1" width="6" height="14" rx="3" fill="#111" />
            <path d="M2 10c0 8 12 8 12 0M8 17v5M4 22h8" fill="none" stroke="#333" strokeWidth="1.2" />
          </svg>
        </TrayIcon>
        <TrayIcon>
          <svg viewBox="0 0 22 20" className="h-[20px] w-[22px]" aria-hidden="true">
            <path d="M1 7h4l5-5v16l-5-5H1z" fill="none" stroke="#444" strokeWidth="1.1" />
            <path d="M13 6c2 2 2 6 0 8M16 4c3 3 3 9 0 12M19 2c4 4 4 12 0 16" fill="none" stroke="#888" strokeWidth="1" />
          </svg>
        </TrayIcon>
        <TrayIcon>
          <svg viewBox="0 0 20 22" className="h-[22px] w-[20px]" aria-hidden="true">
            <rect width="20" height="22" fill="#16190f" />
            <path d="M4 10c3-4 9-4 12 0-3 4-9 4-12 0z" fill="none" stroke="#7bb026" strokeWidth="1.6" />
            <circle cx="14" cy="17" r="4" fill="#ddd" />
          </svg>
        </TrayIcon>
        <TrayIcon>
          <svg viewBox="0 0 22 20" className="h-[20px] w-[22px]" aria-hidden="true">
            <ellipse cx="9" cy="8" rx="8" ry="7" fill="#2dc25a" />
            <ellipse cx="16" cy="14" rx="5.5" ry="4.5" fill="#d8d8d8" />
          </svg>
        </TrayIcon>
        <TrayIcon><span className="text-[24px] font-bold leading-none text-[#e0322c]">S</span></TrayIcon>
        <TrayIcon>
          <svg viewBox="0 0 20 22" className="h-[22px] w-[20px]" aria-hidden="true">
            <rect x="2" y="1" width="16" height="17" fill="#fff" stroke="#7a9cc0" />
            <path d="M2 4h16" stroke="#3b7dc0" strokeWidth="2" />
            <path d="M5 8h10M5 11h10" stroke="#9a9a9a" />
            <path d="M10 13l6 7-4 1z" fill="#d8ad7a" />
          </svg>
        </TrayIcon>
        <TrayIcon><QQ /></TrayIcon>
        <TrayIcon><QQ /></TrayIcon>
        <TrayIcon>
          <svg viewBox="0 0 20 24" className="h-[24px] w-[20px]" aria-hidden="true">
            <path d="M10 1l8 3v8c0 5-4 8-8 10-4-2-8-5-8-10V4z" fill="#fff" stroke="#222" strokeWidth="1.2" />
            <path d="M10 1v21M2 11h16" stroke="#222" />
            <path d="M14 14l5 9h-10z" fill="#f6c12c" />
          </svg>
        </TrayIcon>
        <TrayIcon>
          <svg viewBox="0 0 20 24" className="h-[24px] w-[20px]" aria-hidden="true">
            <path d="M1 4l14-3v20L1 19z" fill="#f5f5f5" stroke="#222" strokeWidth="1.1" />
            <path d="M7 9a3 3 0 0 1 5 1M11 15a3 3 0 0 1-5-1" fill="none" stroke="#222" strokeWidth="1.2" />
            <circle cx="14" cy="18" r="4.5" fill="#2a6fb8" />
          </svg>
        </TrayIcon>
        <TrayIcon>
          <svg viewBox="0 0 20 20" className="h-[20px] w-[20px]" aria-hidden="true">
            <path d="M3 15L10 2l7 9-4 6-7 1z" fill="#c9c9c9" stroke="#222" strokeWidth="1.2" />
            <path d="M2 3l16 15" stroke="#222" strokeWidth="1.2" />
          </svg>
        </TrayIcon>
        <TrayIcon>
          <svg viewBox="0 0 20 20" className="h-[20px] w-[20px]" aria-hidden="true">
            <path d="M1 19a18 18 0 0 1 18-18M5 19A14 14 0 0 1 15 5M9 19a9 9 0 0 1 6-8" fill="none" stroke="#444" strokeWidth="1.2" />
            <circle cx="14" cy="17" r="2" fill="#444" />
          </svg>
        </TrayIcon>
        <TrayIcon>
          <svg viewBox="0 0 20 18" className="h-[18px] w-[20px]" aria-hidden="true">
            <rect x="6" y="4" width="13" height="11" fill="#111" stroke="#555" />
            <path d="M2 1v16M0 6h4" stroke="#111" strokeWidth="2" />
          </svg>
        </TrayIcon>
        <div className="ml-[5px] flex h-[26px] w-[32px] items-center justify-center">
          <svg viewBox="0 0 30 24" className="h-[24px] w-[30px]" aria-hidden="true">
            <rect x=".5" y=".5" width="29" height="23" fill="#fff" stroke="#222" />
            <path d="M4 7h22M4 11h22M4 15h22" stroke="#444" strokeDasharray="1.5 1" />
            <path d="M8 19h14" stroke="#222" />
          </svg>
        </div>
        <div className="ml-[3px] flex h-[30px] w-[30px] items-center justify-center">
          <div className="flex h-[20px] w-[20px] items-center justify-center rounded-full border border-[#777]"><X className="h-[12px] w-[12px] text-[#666]" aria-hidden="true" /></div>
        </div>
        <TrayIcon><span className="flex h-[20px] w-[18px] -rotate-6 items-center justify-center rounded-[3px] bg-[#ee6a25] text-[16px] font-bold leading-none text-white">S</span></TrayIcon>
        <div className="ml-[19px] mr-[9px] flex w-[84px] flex-col items-center text-[16.5px] leading-[22px]">
          <span>23:12</span>
          <span>2024/6/15</span>
        </div>
      </div>
    </footer>
  )
}

function ImeBar() {
  return (
    <div className="absolute left-[1454px] top-[917px] flex items-center">
      <div className="z-10 flex h-[36px] w-[36px] -rotate-6 items-center justify-center rounded-[5px] bg-[#ee6a25] text-[30px] font-bold leading-none text-white">S</div>
      <div className="-ml-[4px] flex h-[31px] w-[312px] items-center gap-[10px] border border-[#d8d8d8] bg-white pl-[11px] text-[#2a6fb8]">
        <span className="w-[20px] text-[18px] font-bold leading-none">英</span>
        <svg viewBox="0 0 20 20" className="h-[20px] w-[20px]" aria-hidden="true"><path d="M12 1a9 9 0 1 1-11 12c7 2 13-4 11-12z" fill="currentColor" /></svg>
        <svg viewBox="0 0 20 20" className="h-[20px] w-[20px]" aria-hidden="true"><circle cx="5" cy="6" r="2" fill="currentColor" /><path d="M14 8c3 0 3 5-1 8 1-3 0-3-1-4s0-4 2-4z" fill="currentColor" /></svg>
        <svg viewBox="0 0 20 20" className="h-[20px] w-[20px]" aria-hidden="true"><circle cx="10" cy="10" r="9" fill="currentColor" /><circle cx="7" cy="8" r="1.3" fill="#fff" /><circle cx="13" cy="8" r="1.3" fill="#fff" /><path d="M6 12c2 3 6 3 8 0" fill="none" stroke="#fff" strokeWidth="1.3" /></svg>
        <svg viewBox="0 0 20 20" className="h-[20px] w-[20px]" aria-hidden="true"><rect x="7" y="1" width="6" height="12" rx="3" fill="currentColor" /><path d="M4 9c0 7 12 7 12 0M10 15v4" fill="none" stroke="currentColor" strokeWidth="1.3" /></svg>
        <svg viewBox="0 0 20 20" className="h-[20px] w-[20px]" aria-hidden="true"><rect x="2" y="3" width="16" height="14" rx="2" fill="currentColor" /><path d="M4 7h12M4 10h12M4 13h12M7 5v10M10 5v10M13 5v10" stroke="#fff" strokeWidth=".9" /></svg>
        <svg viewBox="0 0 20 20" className="h-[20px] w-[20px]" aria-hidden="true"><circle cx="8" cy="5" r="4" fill="currentColor" /><path d="M1 19c0-6 3-8 7-8 2 0 3 .5 3 1v7z" fill="currentColor" /><rect x="12" y="12" width="7" height="7" fill="currentColor" /></svg>
        <svg viewBox="0 0 20 20" className="h-[20px] w-[20px]" aria-hidden="true"><path d="M2 5l5-2h6l5 2-2 4h-2v10H6V9H4z" fill="#8a6fd8" /><circle cx="16" cy="3" r="3" fill="#ef5a3c" /></svg>
        <svg viewBox="0 0 20 20" className="h-[20px] w-[20px]" aria-hidden="true"><path d="M4 15a8 8 0 1 1 12 0l-1 3-3-2H8l-3 2z" fill="currentColor" /><path d="M5 8h3M13 8h2" stroke="#fff" strokeWidth="1.5" /></svg>
        <svg viewBox="0 0 20 20" className="h-[20px] w-[20px]" aria-hidden="true"><rect x="2" y="2" width="7" height="7" rx="2" fill="currentColor" /><rect x="11" y="2" width="7" height="7" rx="2" fill="currentColor" /><rect x="2" y="11" width="7" height="7" rx="2" fill="currentColor" /><rect x="11" y="11" width="7" height="7" rx="2" fill="currentColor" /></svg>
      </div>
    </div>
  )
}

const titleOutline = outline(11, '#000')
const keyOutline = outline(3, '#000') + ',0 0 8px #333'

function BigLine({ text }: { text: string }) {
  return (
    <div className="flex h-[166px] items-center justify-center">
      <span
        className="scale-y-[1.09] whitespace-nowrap text-[143px] font-black leading-[166px] tracking-[-1px] text-[#ffdf00] [-webkit-text-stroke:3px_#ffdf00]"
        style={{ textShadow: titleOutline }}
      >
        {text}
      </span>
    </div>
  )
}

export default function App() {
  return (
    <div className={`relative flex h-[1080px] w-[1919px] flex-col overflow-hidden bg-white ${CJK}`}>
      <TitleBar />
      <TabRow />
      <Ribbon />
      <FormulaBar />
      <Sheet />
      <SheetTabs />
      <StatusBar />
      <Taskbar />

      {/* selected cell H8 */}
      <div className="absolute left-[1140px] top-[626px] h-[48px] w-[159px] border-2 border-[#1f6e4d]" />

      {/* mouse highlight */}
      <div className="absolute left-[7px] top-[380px] h-[73px] w-[73px] rounded-full bg-[#f6ee5a]/40" />
      <svg viewBox="0 0 16 16" className="absolute left-[35px] top-[409px] h-[16px] w-[16px]" aria-hidden="true">
        <path d="M5.5 1h5v4.5H15v5h-4.500V15h-5v-4.500H1v-5h4.500z" fill="#fff" stroke="#000" strokeWidth="1.4" />
      </svg>

      {/* video title */}
      <div className="absolute left-[240px] top-[366px] w-[1440px] font-['Noto_Sans_CJK_SC',sans-serif]">
        <BigLine text="统计指定位数" />
        <BigLine text="的数字个数" />
      </div>

      <ImeBar />

      {/* key press overlay */}
      <div className="absolute left-[22px] top-[977px] flex h-[81px] w-[228px] items-center justify-center rounded-[6px] bg-black/35">
        <span
          className="font-['Liberation_Sans',sans-serif] text-[72px] font-bold leading-none text-white [-webkit-text-stroke:1px_#fff]"
          style={{ textShadow: keyOutline }}
        >
          Ctrl+4
        </span>
      </div>
    </div>
  )
}
